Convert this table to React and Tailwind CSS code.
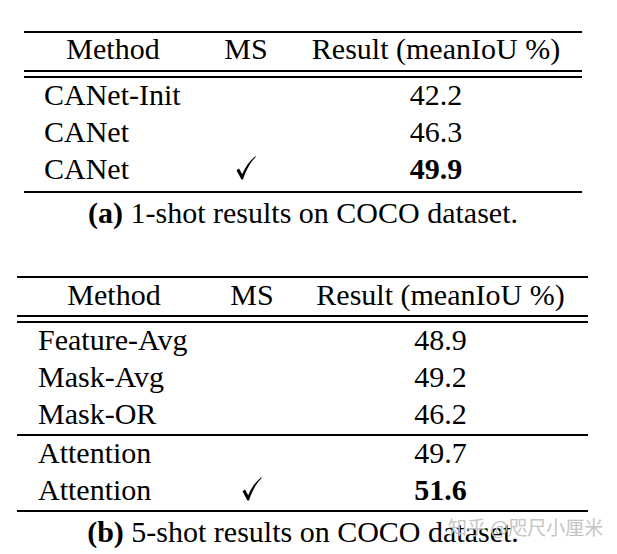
import React from 'react';

const serif = { fontFamily: '"Liberation Serif", "Times New Roman", serif' };

function Check() {
  return (
    <svg width="20" height="24" viewBox="0 0 20 24" className="inline-block">
      <path
        d="M0.5 14.2 L3 12.6 L6.2 18.2 C9 11.5 13.2 5.2 19.2 0.2 L19.8 1 C14.4 6.4 10.4 13.2 7 23.4 L5.4 23.6 Z"
        fill="#000"
      />
    </svg>
  );
}

const tableA = [
  { m: 'CANet-Init', ms: false, r: '42.2' },
  { m: 'CANet', ms: false, r: '46.3' },
  { m: 'CANet', ms: true, r: '49.9', bold: true },
];

const tableB = [
  [
    { m: 'Feature-Avg', ms: false, r: '48.9' },
    { m: 'Mask-Avg', ms: false, r: '49.2' },
    { m: 'Mask-OR', ms: false, r: '46.2' },
  ],
  [
    { m: 'Attention', ms: false, r: '49.7' },
    { m: 'Attention', ms: true, r: '51.6', bold: true },
  ],
];

function Row({ row, cols, pad }) {
  return (
    <div className={`grid h-[37px] leading-[34px] ${cols}`}>
      <div className={pad}>{row.m}</div>
      <div className="flex justify-center pt-[4px]">{row.ms && <Check />}</div>
      <div className={`text-center ${row.bold ? 'font-bold' : ''}`}>{row.r}</div>
    </div>
  );
}

function Header({ cols, pt }) {
  return (
    <div className={`grid h-[37px] leading-[30px] ${cols} ${pt}`}>
      <div className="text-center">Method</div>
      <div className="text-center">MS</div>
      <div className="text-center">Result (meanIoU %)</div>
    </div>
  );
}

export default function App() {
  const colsA = 'grid-cols-[178px_88px_292px]';
  const colsB = 'grid-cols-[194px_82px_295px]';
  return (
    <div className="relative w-[617px] h-[554px] bg-white overflow-hidden text-black text-[30px]" style={serif}>
      <div className="pt-[31px]">
        {/* 1-shot table */}
        <div className="ml-[24px] w-[558px]">
          <div className="h-[2px] bg-black" />
          <Header cols={colsA} pt="pt-[1px]" />
          <div className="h-[2px] bg-black" />
          <div className="h-[4px]" />
          <div className="h-[2px] bg-black" />
          {tableA.map((row, i) => (
            <Row key={i} row={row} cols={colsA} pad="pl-[20px]" />
          ))}
          <div className="mt-[2px] h-[2px] bg-black" />
        </div>
        <div className="mt-[5px] h-[30px] leading-[30px] text-center w-[606px]">
          <span className="font-bold">(a)</span> 1-shot results on COCO dataset.
        </div>

        {/* 5-shot table */}
        <div className="mt-[48px] ml-[17px] w-[571px]">
          <div className="h-[2px] bg-black" />
          <Header cols={colsB} pt="pt-[2px]" />
          <div className="h-[2px] bg-black" />
          <div className="h-[4px]" />
          <div className="h-[2px] bg-black" />
          {tableB[0].map((row, i) => (
            <Row key={i} row={row} cols={colsB} pad="pl-[21px]" />
          ))}
          <div className="h-[2px] bg-black" />
          {tableB[1].map((row, i) => (
            <Row key={i} row={row} cols={colsB} pad="pl-[21px]" />
          ))}
          <div className="h-[2px] bg-black" />
        </div>
        <div className="mt-[5px] h-[30px] leading-[30px] text-center w-[606px]">
          <span className="font-bold">(b)</span> 5-shot results on COCO dataset.
        </div>
      </div>

      <div
        className="absolute left-[448px] top-[515px] text-[19px] leading-[24px] text-[#c4c4c4] whitespace-nowrap"
        style={{ fontFamily: '"Noto Sans CJK SC", "Noto Sans", sans-serif' }}
      >
        知乎 @咫尺小厘米
      </div>
    </div>
  );
}
